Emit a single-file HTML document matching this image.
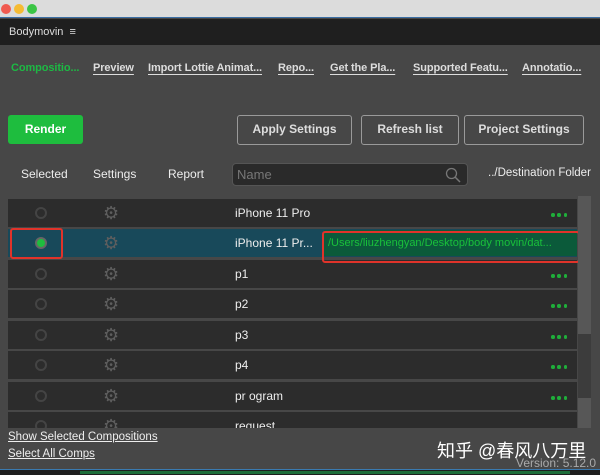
<!DOCTYPE html>
<html><head><meta charset="utf-8"><style>
*{margin:0;padding:0;box-sizing:border-box}
body{width:600px;height:475px;overflow:hidden;background:#474747;font-family:"Liberation Sans","Noto Sans CJK SC",sans-serif;position:relative;color:#e8e8e8}
.a{position:absolute}
.title{left:0;top:0;width:600px;height:18px;background:#dcdcdc;border-bottom:1px solid #3a6ea5}
.dot{top:4px;width:10px;height:10px;border-radius:50%}
.hdr{left:0;top:19px;width:600px;height:26px;background:#1f1f1f;font-size:11px;padding:7px 0 0 9px;color:#ddd}
.tab{top:62px;font-size:11px;font-weight:bold;color:#ddd;text-decoration:underline;text-underline-offset:3px;letter-spacing:-0.1px}
.btn{top:115px;height:30px;border:1.5px solid #9a9a9a;border-radius:3px;font-size:12px;font-weight:bold;color:#ddd;text-align:center;line-height:27px}
.col{top:167px;font-size:12px;color:#eee}
.list{left:8px;top:196px;width:569px;height:232px;overflow:hidden;background:#474747}
.row{position:absolute;left:0;width:569px;height:28px;background:#2c2c2c}
.row .r{position:absolute;left:27px;top:8px;width:12px;height:12px;border-radius:50%;border:2px solid #444}
.row .g{position:absolute;left:95px;top:4px;font-size:18px;color:#5e5e5e;line-height:20px;font-style:normal}
.row .n{position:absolute;left:227px;top:7px;font-size:12px;color:#eee}
.row .d{position:absolute;left:543px;top:14px;width:16px;height:4px;display:flex;justify-content:space-between}
.row .d b{width:3.5px;height:3.5px;border-radius:50%;background:#1fae3a}
.lnk{left:8px;font-size:11.5px;text-decoration:underline;color:#eee}
</style></head><body>
<div class="a title"></div>
<div class="a dot" style="left:1px;background:#f05a50"></div>
<div class="a dot" style="left:14px;background:#f5bb33"></div>
<div class="a dot" style="left:27px;background:#3bc545"></div>
<div class="a hdr">Bodymovin &nbsp;≡</div>
<div class="a tab" style="left:11px;color:#1db944;text-decoration:none">Compositio...</div>
<div class="a tab" style="left:93px">Preview</div>
<div class="a tab" style="left:148px">Import Lottie Animat...</div>
<div class="a tab" style="left:278px">Repo...</div>
<div class="a tab" style="left:330px">Get the Pla...</div>
<div class="a tab" style="left:413px">Supported Featu...</div>
<div class="a tab" style="left:522px">Annotatio...</div>
<div class="a" style="left:8px;top:115px;width:75px;height:29px;background:#1ebd3e;border-radius:3px;font-size:12px;font-weight:bold;color:#fff;text-align:center;line-height:29px">Render</div>
<div class="a btn" style="left:237px;width:115px">Apply Settings</div>
<div class="a btn" style="left:361px;width:98px">Refresh list</div>
<div class="a btn" style="left:464px;width:120px">Project Settings</div>
<div class="a col" style="left:21px">Selected</div>
<div class="a col" style="left:93px">Settings</div>
<div class="a col" style="left:168px">Report</div>
<div class="a" style="left:232px;top:163px;width:236px;height:23px;background:#2a2a2a;border:1px solid #555;border-radius:4px;font-size:13px;color:#777;padding:3px 4px">Name<svg class="a" style="right:6px;top:3px" width="16" height="16" viewBox="0 0 16 16"><circle cx="6.5" cy="6.5" r="5" fill="none" stroke="#777" stroke-width="1.3"/><path d="M10 10l5 5" stroke="#777" stroke-width="1.5"/></svg></div>
<div class="a col" style="left:488px;font-size:11.5px">../Destination Folder</div>
<div class="a list">
<div class="row" style="top:3px"><i class="r"></i><i class="g">⚙</i><span class="n">iPhone 11 Pro</span><span class="d"><b></b><b></b><b></b></span></div>
<div class="row" style="top:33px;background:#18495a"><i class="r" style="background:#1ebd3e;border-color:#666"></i><i class="g">⚙</i><span class="n">iPhone 11 Pr...</span><span class="a" style="left:316px;top:1px;width:253px;height:26px;background:#0b5a3a;font-size:11px;color:#19c13a;padding:7px 4px;white-space:nowrap">/Users/liuzhengyan/Desktop/body movin/dat...</span></div>
<div class="row" style="top:64px"><i class="r"></i><i class="g">⚙</i><span class="n">p1</span><span class="d"><b></b><b></b><b></b></span></div>
<div class="row" style="top:94px"><i class="r"></i><i class="g">⚙</i><span class="n">p2</span><span class="d"><b></b><b></b><b></b></span></div>
<div class="row" style="top:125px"><i class="r"></i><i class="g">⚙</i><span class="n">p3</span><span class="d"><b></b><b></b><b></b></span></div>
<div class="row" style="top:155px"><i class="r"></i><i class="g">⚙</i><span class="n">p4</span><span class="d"><b></b><b></b><b></b></span></div>
<div class="row" style="top:186px"><i class="r"></i><i class="g">⚙</i><span class="n">pr ogram</span><span class="d"><b></b><b></b><b></b></span></div>
<div class="row" style="top:216px"><i class="r"></i><i class="g">⚙</i><span class="n">request</span></div>
</div>
<div class="a" style="left:10px;top:228px;width:53px;height:31px;border:2px solid #e0332a;border-radius:3px"></div>
<div class="a" style="left:322px;top:231px;width:258px;height:32px;border:2px solid #e0332a;border-radius:3px"></div>
<div class="a" style="left:578px;top:196px;width:13px;height:232px;background:#3c3c3c"></div>
<div class="a" style="left:578px;top:196px;width:13px;height:138px;background:#575757"></div>
<div class="a" style="left:578px;top:398px;width:13px;height:30px;background:#575757"></div>
<div class="a lnk" style="top:431px">Show Selected Compositions</div>
<div class="a lnk" style="top:448px">Select All Comps</div>
<div class="a" style="left:437px;top:437px;font-size:18px;color:#fff">知乎 @春风八万里</div>
<div class="a" style="left:516px;top:456px;font-size:12px;color:#aaa">Version: 5.12.0</div>
<div class="a" style="left:0;top:469px;width:600px;height:6px;background:#1e1e1e;border-top:1px solid #3a7ab0"></div>
<div class="a" style="left:80px;top:471px;width:490px;height:3px;background:#1e6e3a"></div>
</body></html>
